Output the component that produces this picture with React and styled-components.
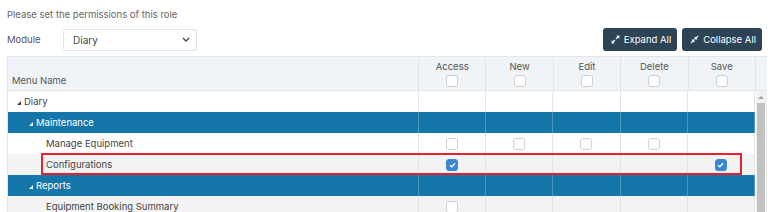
import React from 'react';
import styled, { createGlobalStyle } from 'styled-components';
import { FaExpandAlt, FaCompressAlt } from 'react-icons/fa';

const GlobalStyle = createGlobalStyle`
  body {
    margin: 0;
    background: #fff;
    font-family: Inter, "Noto Sans", sans-serif;
    color: #444;
  }
`;

const Page = styled.div`
  width: 768px;
  height: 212px;
  overflow: hidden;
  padding: 8px 0 0 7px;
  box-sizing: border-box;
`;

const Intro = styled.div`
  font-size: 9.5px;
  color: #666;
  height: 14px;
  line-height: 14px;
`;

const Toolbar = styled.div`
  display: flex;
  align-items: center;
  height: 23px;
  margin-top: 6px;
  padding-right: 6px;
`;

const Label = styled.span`
  font-size: 9.5px;
  color: #555;
  width: 56px;
`;

const Select = styled.div`
  width: 134px;
  height: 22px;
  box-sizing: border-box;
  border: 1px solid #e3e3e3;
  border-radius: 3px;
  display: flex;
  align-items: center;
  justify-content: space-between;
  padding: 0 6px 0 9px;
  font-size: 10px;
  color: #444;
`;

const Spacer = styled.div`
  flex: 1;
`;

const Button = styled.button`
  height: 23px;
  display: flex;
  align-items: center;
  gap: 4px;
  padding: 0 6px 0 8px;
  margin-left: 5px;
  border: none;
  border-radius: 3px;
  background: #2d4457;
  color: #fff;
  font-family: inherit;
  font-size: 9.5px;
  svg { font-size: 9px; }
`;

const Table = styled.div`
  margin-top: 5px;
  width: 760px;
  border: 1px solid #e4e6ea;
  border-right: none;
  box-sizing: border-box;
`;

const cols = '411px repeat(5, 67.4px) 1fr';

const HeadRow = styled.div`
  display: grid;
  grid-template-columns: ${cols};
  height: 33px;
  background: #f0f3f7;
  border-bottom: 1px solid #e2e4e8;
`;

const HeadCell = styled.div`
  border-right: 1px solid #e2e4e8;
  display: flex;
  flex-direction: column;
  align-items: ${p => (p.$left ? 'flex-start' : 'center')};
  justify-content: ${p => (p.$left ? 'flex-end' : 'flex-start')};
  padding: ${p => (p.$left ? '0 0 4px 4px' : '4px 0 0')};
  font-size: 9.5px;
  color: #555;
  gap: 3px;
  &:last-child { border-right: none; }
`;

const Body = styled.div`
  display: flex;
`;

const Rows = styled.div`
  width: 747px;
`;

const Row = styled.div`
  position: relative;
  display: grid;
  grid-template-columns: 411px repeat(5, 67.2px);
  height: 21px;
  background: ${p => (p.$blue ? '#1577a9' : p.$grey ? '#f3f3f3' : '#fff')};
  color: ${p => (p.$blue ? '#fff' : '#444')};
`;

const NameCell = styled.div`
  display: flex;
  align-items: center;
  padding-left: ${p => p.$indent}px;
  font-size: 9.5px;
  gap: 3px;
  border-right: 1px solid ${p => (p.$blue ? '#4d96bd' : '#e4e4e4')};
`;

const Cell = styled.div`
  display: flex;
  align-items: center;
  justify-content: center;
  border-right: 1px solid ${p => (p.$blue ? '#4d96bd' : '#e4e4e4')};
`;

const Caret = styled.span`
  width: 0;
  height: 0;
  border-left: 4px solid transparent;
  border-bottom: 4px solid ${p => (p.$blue ? '#fff' : '#444')};
  margin-top: 2px;
`;

const Box = styled.span`
  width: 12px;
  height: 12px;
  box-sizing: border-box;
  border-radius: 3px;
  border: 1px solid ${p => (p.$checked ? '#3b86d4' : '#cfcfcf')};
  background: ${p => (p.$checked ? '#3b86d4' : '#fff')};
  display: flex;
  align-items: center;
  justify-content: center;
`;

const Highlight = styled.div`
  position: absolute;
  left: 33px;
  width: 701px;
  top: -1px;
  bottom: 0;
  border: 2px solid #e8202f;
  box-sizing: border-box;
  pointer-events: none;
`;

const Scrollbar = styled.div`
  width: 12px;
  background: #f1f1f1;
  display: flex;
  flex-direction: column;
  align-items: center;
  margin-left: 1px;
`;

const ScrollArrow = styled.span`
  width: 0;
  height: 0;
  margin: 5px 0 4px;
  border-left: 3px solid transparent;
  border-right: 3px solid transparent;
  border-bottom: 3px solid #a3a3a3;
`;

const Thumb = styled.div`
  width: 8px;
  flex: 1;
  background: #c1c1c1;
`;

const Check = ({ checked }) => (
  <Box $checked={checked}>
    {checked && (
      <svg width="7" height="6" viewBox="0 0 7 6">
        <path d="M1 3.2 L2.8 4.8 L6 1.2" stroke="#fff" strokeWidth="1.3" fill="none" />
      </svg>
    )}
  </Box>
);

const rows = [
  { name: 'Diary', indent: 9, caret: true, boxes: [] },
  { name: 'Maintenance', indent: 21, caret: true, blue: true, boxes: [] },
  { name: 'Manage Equipment', indent: 38, boxes: [0, 0, 0, 0, null] },
  { name: 'Configurations', indent: 38, grey: true, mark: true, boxes: [1, null, null, null, 1] },
  { name: 'Reports', indent: 21, caret: true, blue: true, boxes: [] },
  { name: 'Equipment Booking Summary', indent: 38, grey: true, boxes: [0] },
];

const perms = ['Access', 'New', 'Edit', 'Delete', 'Save'];

export default function App() {
  return (
    <Page>
      <GlobalStyle />
      <Intro>Please set the permissions of this role</Intro>
      <Toolbar>
        <Label>Module</Label>
        <Select>
          <span>Diary</span>
          <svg width="8" height="5" viewBox="0 0 8 5">
            <path d="M1 1 L4 4 L7 1" stroke="#444" strokeWidth="1.3" fill="none" />
          </svg>
        </Select>
        <Spacer />
        <Button><FaExpandAlt /> Expand All</Button>
        <Button><FaCompressAlt /> Collapse All</Button>
      </Toolbar>
      <Table>
        <HeadRow>
          <HeadCell $left>Menu Name</HeadCell>
          {perms.map(p => (
            <HeadCell key={p}>
              {p}
              <Check />
            </HeadCell>
          ))}
          <HeadCell />
        </HeadRow>
        <Body>
          <Rows>
            {rows.map(r => (
              <Row key={r.name} $blue={r.blue} $grey={r.grey}>
                <NameCell $indent={r.indent} $blue={r.blue}>
                  {r.caret && <Caret $blue={r.blue} />}
                  {r.name}
                </NameCell>
                {perms.map((p, i) => (
                  <Cell key={p} $blue={r.blue}>
                    {r.boxes[i] != null && <Check checked={r.boxes[i] === 1} />}
                  </Cell>
                ))}
                {r.mark && <Highlight />}
              </Row>
            ))}
          </Rows>
          <Scrollbar>
            <ScrollArrow />
            <Thumb />
          </Scrollbar>
        </Body>
      </Table>
    </Page>
  );
}
